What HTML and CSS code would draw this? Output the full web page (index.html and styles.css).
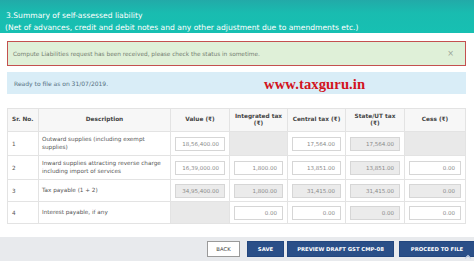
FILE: index.html
```html
<!DOCTYPE html>
<html>
<head>
<meta charset="utf-8">
<link rel="stylesheet" href="styles.css">
</head>
<body>
<div class="head">
  <div class="title">3.Summary of self-assessed liability</div>
  <div class="sub">(Net of advances, credit and debit notes and any other adjustment due to amendments etc.)</div>
</div>
<div class="alert">
  <span>Compute Liabilities request has been received, please check the status in sometime.</span>
  <span class="close">×</span>
</div>
<div class="info">
  <span>Ready to file as on 31/07/2019.</span>
  <span class="wm">www.taxguru.in</span>
</div>
<table class="grid">
  <colgroup>
    <col class="c1"><col class="c2"><col class="c3"><col class="c4"><col class="c5"><col class="c6"><col class="c7">
  </colgroup>
  <thead>
    <tr>
      <th class="l">Sr. No.</th>
      <th>Description</th>
      <th>Value (₹)</th>
      <th>Integrated tax (₹)</th>
      <th>Central tax (₹)</th>
      <th>State/UT tax (₹)</th>
      <th>Cess (₹)</th>
    </tr>
  </thead>
  <tbody>
    <tr class="tall">
      <td>1</td>
      <td class="desc">Outward supplies (including exempt supplies)</td>
      <td><div class="in">18,56,400.00</div></td>
      <td class="dis"></td>
      <td><div class="in">17,564.00</div></td>
      <td><div class="in ro">17,564.00</div></td>
      <td class="dis"></td>
    </tr>
    <tr class="tall">
      <td>2</td>
      <td class="desc">Inward supplies attracting reverse charge including import of services</td>
      <td><div class="in">16,39,000.00</div></td>
      <td><div class="in">1,800.00</div></td>
      <td><div class="in">13,851.00</div></td>
      <td><div class="in ro">13,851.00</div></td>
      <td><div class="in">0.00</div></td>
    </tr>
    <tr>
      <td>3</td>
      <td class="desc">Tax payable (1 + 2)</td>
      <td><div class="in ro">34,95,400.00</div></td>
      <td><div class="in ro">1,800.00</div></td>
      <td><div class="in ro">31,415.00</div></td>
      <td><div class="in ro">31,415.00</div></td>
      <td><div class="in ro">0.00</div></td>
    </tr>
    <tr>
      <td>4</td>
      <td class="desc">Interest payable, if any</td>
      <td class="dis"></td>
      <td><div class="in">0.00</div></td>
      <td><div class="in">0.00</div></td>
      <td><div class="in ro">0.00</div></td>
      <td><div class="in">0.00</div></td>
    </tr>
  </tbody>
</table>
<div class="foot">
  <button class="btn back">BACK</button>
  <button class="btn save">SAVE</button>
  <button class="btn prev">PREVIEW DRAFT GST CMP-08</button>
  <button class="btn proc">PROCEED TO FILE</button>
  <span class="top"><svg width="8" height="5" viewBox="0 0 8 5"><path d="M1 4.5 L4 1.5 L7 4.5" fill="none" stroke="#c9d4e6" stroke-width="1.2"/></svg></span>
</div>
</body>
</html>
```

FILE: styles.css
```css
html, body {
  margin: 0;
  padding: 0;
  background: #ffffff;
  font-family: "DejaVu Sans", Verdana, sans-serif;
  overflow: hidden;
}
body {
  width: 474px;
  height: 261px;
  position: relative;
}
.head {
  background: linear-gradient(#22aaa8, #19bcb0 40%, #17c0b2);
  color: #ffffff;
  height: 33px;
  box-sizing: border-box;
  padding: 10px 5px 0 6px;
  font-size: 7.6px;
  line-height: 11.5px;
}
.head .sub {
  margin-left: -1px;
}
.alert {
  margin: 8px 8px 0 7px;
  height: 25px;
  box-sizing: border-box;
  border: 1.5px solid #c4504f;
  background: #dff0d8;
  color: #747d70;
  font-size: 5.8px;
  display: flex;
  align-items: center;
  justify-content: space-between;
  padding: 0 11px 0 5px;
}
.alert .close {
  font-size: 8px;
  color: #9aa597;
}
.info {
  margin: 6px 8px 0 7px;
  height: 22px;
  background: #d9edf7;
  color: #55707f;
  font-size: 6px;
  display: flex;
  align-items: center;
  padding: 0 0 0 7px;
}
.info .wm {
  margin-left: 156px;
  margin-top: 3px;
  font-family: "Liberation Serif", "Times New Roman", serif;
  font-weight: bold;
  font-size: 14.6px;
  color: #d2141e;
  letter-spacing: 0.1px;
}
.grid {
  margin: 14px 0 0 7px;
  width: 458px;
  border-collapse: collapse;
  table-layout: fixed;
  font-size: 5.7px;
  color: #555555;
}
.c1 { width: 31px; }
.c2 { width: 132px; }
.c3 { width: 59px; }
.c4 { width: 58px; }
.c5 { width: 58px; }
.c6 { width: 59px; }
.c7 { width: 61px; }
.grid th, .grid td {
  border: 1px solid #e3e3e3;
  padding: 0 4px;
}
.grid th {
  height: 22px;
  background: #f7f7f7;
  font-weight: bold;
  color: #444444;
  text-align: center;
  font-size: 5.8px;
  line-height: 7.5px;
}
.grid th.l {
  text-align: left;
}
.grid td {
  height: 21px;
  vertical-align: middle;
}
.grid tr.tall td {
  height: 23px;
}
.grid td.desc {
  line-height: 7.5px;
  padding-left: 3px;
  padding-right: 8px;
}
.grid td.dis {
  background: #e9e9e9;
}
.in {
  height: 14px;
  box-sizing: border-box;
  border: 1px solid #d6d6d6;
  background: #ffffff;
  color: #8a8a8a;
  text-align: right;
  line-height: 12px;
  padding-right: 5px;
  font-size: 5.5px;
}
.in.ro {
  background: #ebebeb;
}
.foot {
  position: absolute;
  left: 0;
  right: 0;
  bottom: 0;
  height: 24px;
  background: #e8eaed;
  display: flex;
  align-items: center;
  justify-content: flex-end;
  padding-top: 0;
}
.btn {
  height: 16px;
  margin: 0 0 0 7px;
  padding: 0;
  border: 1px solid #22467e;
  background: #2a4f88;
  color: #ffffff;
  font-family: "DejaVu Sans", Verdana, sans-serif;
  font-weight: bold;
  font-size: 5.3px;
  text-align: center;
}
.btn.back {
  width: 33px;
  background: #ffffff;
  color: #444444;
  border: 1px solid #9a9a9a;
  font-weight: normal;
}
.btn.save { width: 37px; margin-left: 7px; }
.btn.prev { width: 107px; margin-left: 3px; }
.btn.proc { width: 76px; margin-left: 5px; margin-right: -1px; }
.top {
  position: absolute;
  right: 1px;
  bottom: 1px;
  width: 11px;
  height: 7px;
  display: flex;
  align-items: center;
  justify-content: center;
}
```
